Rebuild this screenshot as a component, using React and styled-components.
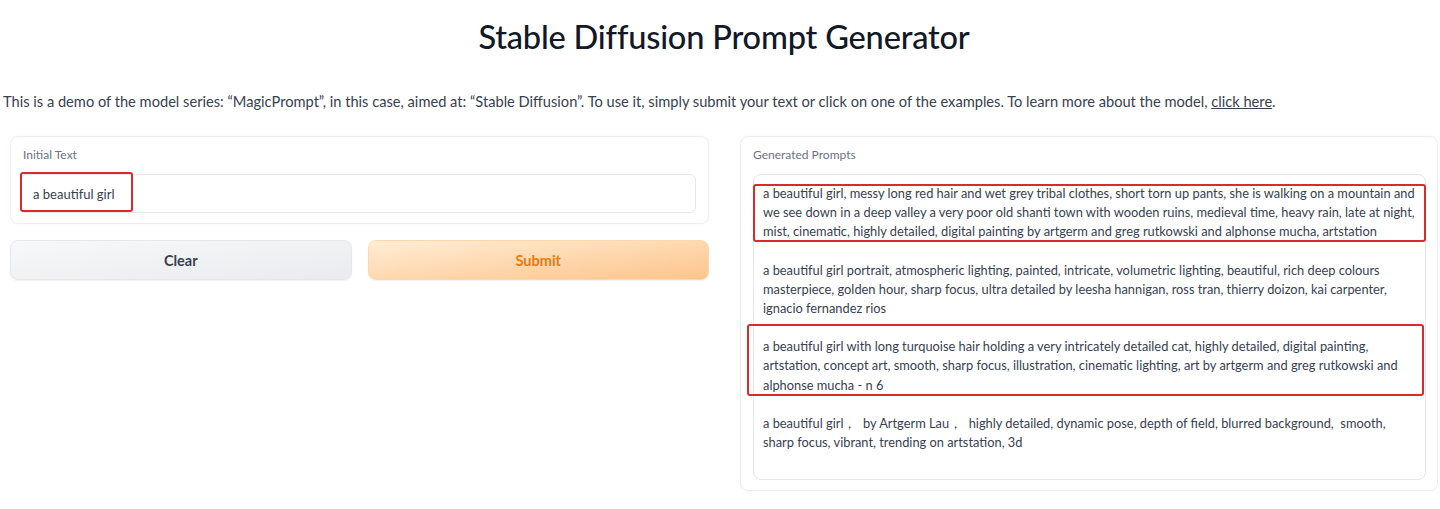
import * as React from 'react'
import styled, { createGlobalStyle } from 'styled-components'

const GlobalStyle = createGlobalStyle`
	html, body {
		margin: 0;
		padding: 0;
		background: #ffffff;
	}
	body {
		font-family: Lato, "Noto Sans", sans-serif;
		color: #374151;
	}
`

const Page = styled.div`
	width: 1440px;
	height: 509px;
	overflow: hidden;
	padding: 0 2px 0 3px;
	box-sizing: border-box;
`

const Title = styled.h1`
	margin: 0;
	padding: 15px 0 0 7px;
	height: 44px;
	text-align: center;
	font-size: 32.6px;
	line-height: 44px;
	font-weight: 500;
	color: #111827;
	letter-spacing: -0.2px;
`

const Intro = styled.p`
	margin: 33px 0 0;
	font-size: 14.65px;
	line-height: 20px;
	color: #374151;
	white-space: nowrap;

	a {
		color: #374151;
		text-decoration: underline;
	}
`

const Columns = styled.div`
	display: grid;
	grid-template-columns: 699px 698px;
	column-gap: 31px;
	margin-top: 24px;
	padding-left: 7px;
`

const Column = styled.div`
	display: flex;
	flex-direction: column;
	gap: 16px;
`

const Card = styled.div`
	background: #ffffff;
	border: 1px solid #eceef1;
	border-radius: 8px;
	padding: 10px 12px 10px 12px;
	box-sizing: border-box;
	height: ${p => p.$height || 'auto'};
	box-shadow: 0 0 6px rgba(17, 24, 39, 0.03);
`

const Label = styled.div`
	font-size: 12px;
	line-height: 16px;
	color: #6b7280;
	margin-bottom: 11px;
`

const Input = styled.div`
	position: relative;
	height: 39px;
	border: 1px solid #e5e7eb;
	border-radius: 6px;
	box-sizing: border-box;
	display: flex;
	align-items: center;
	padding-left: 12px;
	font-size: 13px;
	color: #374151;
	margin-left: -3px;
`

const Highlight = styled.span`
	position: absolute;
	pointer-events: none;
	border: 2px solid #d92b2b;
	border-radius: 3px;
	top: ${p => p.$top}px;
	left: ${p => p.$left}px;
	width: ${p => p.$width}px;
	height: ${p => p.$height}px;
	box-sizing: border-box;
`

const ButtonRow = styled.div`
	display: grid;
	grid-template-columns: 1fr 1fr;
	column-gap: 16px;
`

const Button = styled.button`
	height: 40px;
	border-radius: 8px;
	font-family: inherit;
	font-size: 14.5px;
	font-weight: 700;
	cursor: pointer;
	border: 1px solid ${p => (p.$primary ? '#fed7aa' : '#e5e7eb')};
	color: ${p => (p.$primary ? '#ea7a0c' : '#374151')};
	background: ${p =>
		p.$primary
			? 'linear-gradient(to bottom right, #ffedd5, #fdc48b)'
			: 'linear-gradient(to bottom right, #f7f8fa, #e9ebee)'};
	box-shadow: 0 1px 2px rgba(0, 0, 0, 0.06);
`

const Results = styled.div`
	position: relative;
	height: 306px;
	border: 1px solid #e5e7eb;
	border-radius: 8px;
	box-sizing: border-box;
	margin-right: -1px;
`

const Prompt = styled.div`
	position: relative;
	padding: 9px 9px 10px 9px;
	font-size: 12.84px;
	line-height: 19.2px;
	color: #374151;
`

const Line = styled.div`
	white-space: pre;
`

const prompts = [
	{
		lines: [
			'a beautiful girl, messy long red hair and wet grey tribal clothes, short torn up pants, she is walking on a mountain and',
			'we see down in a deep valley a very poor old shanti town with wooden ruins, medieval time, heavy rain, late at night,',
			'mist, cinematic, highly detailed, digital painting by artgerm and greg rutkowski and alphonse mucha, artstation'
		],
		mark: { top: 9, left: -1, width: 673, height: 58 }
	},
	{
		lines: [
			'a beautiful girl portrait, atmospheric lighting, painted, intricate, volumetric lighting, beautiful, rich deep colours',
			'masterpiece, golden hour, sharp focus, ultra detailed by leesha hannigan, ross tran, thierry doizon, kai carpenter,',
			'ignacio fernandez rios'
		]
	},
	{
		lines: [
			'a beautiful girl with long turquoise hair holding a very intricately detailed cat, highly detailed, digital painting,',
			'artstation, concept art, smooth, sharp focus, illustration, cinematic lighting, art by artgerm and greg rutkowski and',
			'alphonse mucha - n 6'
		],
		mark: { top: -4, left: -7, width: 677, height: 72 }
	},
	{
		lines: [
			'a beautiful girl，  by Artgerm Lau，  highly detailed, dynamic pose, depth of field, blurred background,  smooth,',
			'sharp focus, vibrant, trending on artstation, 3d'
		]
	}
]

const App = () => {
	return (
		<Page>
			<GlobalStyle />
			<Title>Stable Diffusion Prompt Generator</Title>
			<Intro>
				This is a demo of the model series: “MagicPrompt”, in this case, aimed
				at: “Stable Diffusion”. To use it, simply submit your text or click on
				one of the examples. To learn more about the model,{' '}
				<a href="#">click here</a>.
			</Intro>
			<Columns>
				<Column>
					<Card>
						<Label>Initial Text</Label>
						<Input>
							a beautiful girl
							<Highlight $top={-3} $left={-1} $width={113} $height={40} />
						</Input>
					</Card>
					<ButtonRow>
						<Button>Clear</Button>
						<Button $primary>Submit</Button>
					</ButtonRow>
				</Column>
				<Card $height="355px">
					<Label>Generated Prompts</Label>
					<Results>
						{prompts.map(item => (
							<Prompt key={item.lines[0]}>
								{item.lines.map(line => (
									<Line key={line}>{line}</Line>
								))}
								{item.mark && (
									<Highlight
										$top={item.mark.top}
										$left={item.mark.left}
										$width={item.mark.width}
										$height={item.mark.height}
									/>
								)}
							</Prompt>
						))}
					</Results>
				</Card>
			</Columns>
		</Page>
	)
}

export default App
